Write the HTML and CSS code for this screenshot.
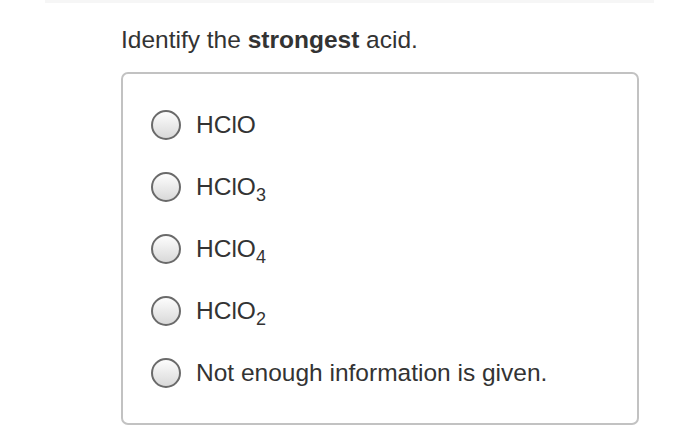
FILE: index.html
```html
<!DOCTYPE html>
<html lang="en">
<head>
<meta charset="utf-8">
<title>Identify the strongest acid</title>
<link rel="stylesheet" href="styles.css">
</head>
<body>
<div class="topbar"></div>
<main class="question">
  <p class="prompt">Identify the <b>strongest</b> acid.</p>
  <div class="choices">
    <label class="choice"><span class="radio"></span><span class="text">HClO</span></label>
    <label class="choice"><span class="radio"></span><span class="text">HClO<sub>3</sub></span></label>
    <label class="choice"><span class="radio"></span><span class="text">HClO<sub>4</sub></span></label>
    <label class="choice"><span class="radio"></span><span class="text">HClO<sub>2</sub></span></label>
    <label class="choice"><span class="radio"></span><span class="text">Not enough information is given.</span></label>
  </div>
</main>
</body>
</html>
```
FILE: styles.css
```css
html, body {
  margin: 0;
  padding: 0;
  background: #ffffff;
}

body {
  font-family: "Liberation Sans", Arial, Helvetica, sans-serif;
  color: #333333;
  width: 700px;
  height: 427px;
  overflow: hidden;
}

.topbar {
  margin-left: 45px;
  width: 609px;
  height: 3px;
  background: #f6f6f6;
}

.question {
  margin-left: 121px;
  width: 518px;
}

.prompt {
  margin: 23px 0 18px 0;
  font-size: 24.5px;
  line-height: 28px;
}

.prompt b {
  font-weight: bold;
}

.choices {
  box-sizing: border-box;
  height: 353px;
  border: 2px solid #c2c2c2;
  border-radius: 7px;
  padding: 20px 0 19px 28px;
  display: flex;
  flex-direction: column;
}

.choice {
  height: 62px;
  display: flex;
  align-items: center;
  gap: 15px;
}

.radio {
  box-sizing: border-box;
  width: 30px;
  height: 30px;
  flex: 0 0 30px;
  border-radius: 50%;
  border: 2px solid #6a6a6a;
  background: linear-gradient(#fdfdfd, #d9d9d9);
}

.text {
  font-size: 24.5px;
  line-height: 28px;
  white-space: nowrap;
}

.text sub {
  font-size: 18px;
  line-height: 0;
  vertical-align: -6px;
}
```
